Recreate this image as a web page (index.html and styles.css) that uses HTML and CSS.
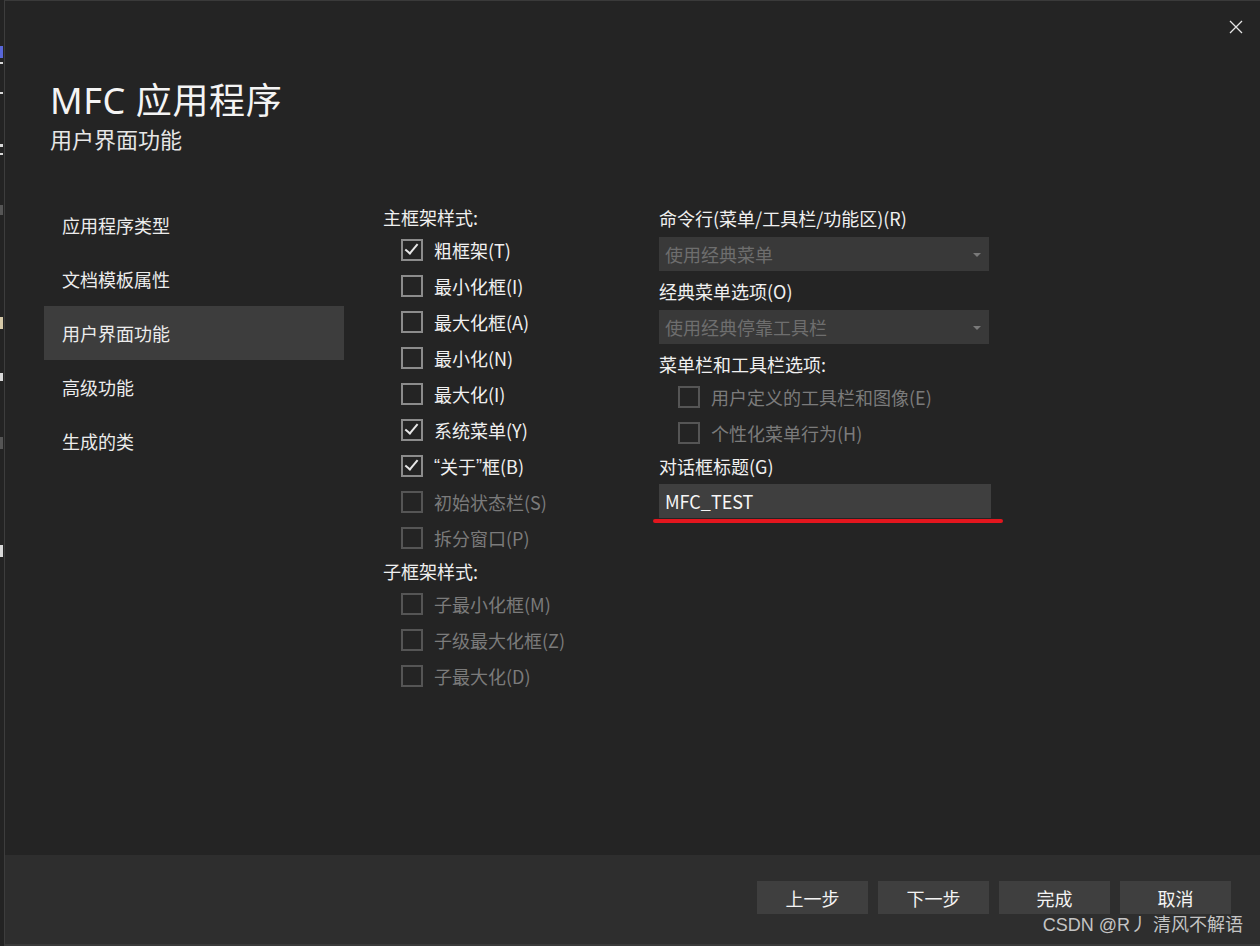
FILE: index.html
```html
<!DOCTYPE html>
<html lang="zh-CN">
  <head>
    <meta charset="UTF-8" />
    <meta name="viewport" content="width=device-width, initial-scale=1.0" />
    <title>MFC 应用程序 - 用户界面功能</title>
    <link rel="stylesheet" href="styles.css">
  </head>
  <body>
    <!-- sliver of the editor window behind the wizard -->
    <div class="behind">
      <span class="mark blue" style="margin-top:46px;height:12px"></span>
      <span class="mark" style="margin-top:4px;height:2px"></span>
      <span class="mark" style="margin-top:28px;height:2px"></span>
      <span class="mark" style="margin-top:50px;height:3px"></span>
      <span class="mark" style="margin-top:6px;height:2px"></span>
      <span class="mark dim" style="margin-top:50px;height:10px"></span>
      <span class="mark tan" style="margin-top:102px;height:12px"></span>
      <span class="mark" style="margin-top:44px;height:8px"></span>
      <span class="mark dim" style="margin-top:56px;height:12px"></span>
      <span class="mark" style="margin-top:96px;height:12px"></span>
    </div>

    <div class="dialog">
      <div class="dialog-body">
        <div class="header">
          <div class="titles">
            <h1>MFC 应用程序</h1>
            <h2>用户界面功能</h2>
          </div>
          <button class="close" title="关闭">
            <svg width="14" height="14" viewBox="0 0 14 14">
              <path d="M1 1 L13 13 M13 1 L1 13" stroke="#e6e6e6" stroke-width="1.3" fill="none" />
            </svg>
          </button>
        </div>

        <div class="main">
          <ul class="nav">
            <li>应用程序类型</li>
            <li>文档模板属性</li>
            <li class="active">用户界面功能</li>
            <li>高级功能</li>
            <li>生成的类</li>
          </ul>

          <div class="col-frames">
            <div class="group-title">主框架样式:</div>
            <label class="check checked"><span class="box"></span>粗框架(T)</label>
            <label class="check"><span class="box"></span>最小化框(I)</label>
            <label class="check"><span class="box"></span>最大化框(A)</label>
            <label class="check"><span class="box"></span>最小化(N)</label>
            <label class="check"><span class="box"></span>最大化(I)</label>
            <label class="check checked"><span class="box"></span>系统菜单(Y)</label>
            <label class="check checked"><span class="box"></span><span class="q">“</span>关于<span class="q">”</span>框(B)</label>
            <label class="check disabled"><span class="box"></span>初始状态栏(S)</label>
            <label class="check disabled"><span class="box"></span>拆分窗口(P)</label>
            <div class="group-title">子框架样式:</div>
            <label class="check disabled"><span class="box"></span>子最小化框(M)</label>
            <label class="check disabled"><span class="box"></span>子级最大化框(Z)</label>
            <label class="check disabled"><span class="box"></span>子最大化(D)</label>
          </div>

          <div class="col-options">
            <div class="field-label first">命令行(菜单/工具栏/功能区)(R)</div>
            <div class="select">使用经典菜单<span class="arrow"></span></div>
            <div class="field-label">经典菜单选项(O)</div>
            <div class="select">使用经典停靠工具栏<span class="arrow"></span></div>
            <div class="field-label">菜单栏和工具栏选项:</div>
            <label class="check disabled"><span class="box"></span>用户定义的工具栏和图像(E)</label>
            <label class="check disabled"><span class="box"></span>个性化菜单行为(H)</label>
            <div class="field-label first">对话框标题(G)</div>
            <div class="input-wrap">
              <input type="text" class="text-input" value="MFC_TEST" />
              <span class="underline"></span>
            </div>
          </div>
        </div>
      </div>

      <div class="footer">
        <button class="btn">上一步</button>
        <button class="btn">下一步</button>
        <button class="btn">完成</button>
        <button class="btn">取消</button>
        <span class="watermark">CSDN @R丿 清风不解语</span>
      </div>
    </div>
  </body>
</html>
```

FILE: styles.css
```css
body {
  margin: 0;
  height: 946px;
  display: flex;
  background-color: #252526;
  font-family: "Noto Sans CJK SC", "Liberation Sans", sans-serif;
  color: #f0f0f0;
  overflow: hidden;
}
.behind {
  width: 4px;
  background-color: #232323;
  display: flex;
  flex-direction: column;
}
.mark {
  display: block;
  width: 3px;
  background-color: #d8d8d8;
}
.mark.blue {
  background-color: #5866d8;
}
.mark.dim {
  background-color: #555;
}
.mark.tan {
  background-color: #d6c9a8;
}
.dialog {
  flex: 1;
  display: flex;
  flex-direction: column;
  background-color: #242424;
  border-left: 1px solid #3d3d3d;
  border-top: 1px solid #3a3a3a;
  border-bottom: 2px solid #3a3a3a;
}
.dialog-body {
  flex: 1;
}
.header {
  display: flex;
  justify-content: space-between;
  align-items: flex-start;
}
.titles {
  padding-top: 77px;
  padding-left: 45px;
}
h1 {
  margin: 0;
  font-family: "Noto Sans", "Noto Sans CJK SC", sans-serif;
  font-size: 36px;
  line-height: 46px;
  font-weight: 400;
  letter-spacing: 0.6px;
  color: #f4f4f4;
}
h2 {
  margin: 0;
  font-size: 22px;
  line-height: 28px;
  font-weight: 400;
  color: #e6e6e6;
}
.close {
  background: none;
  border: none;
  padding: 0;
  margin: 19px 17px 0 0;
  width: 14px;
  height: 14px;
  cursor: pointer;
}
.close svg {
  display: block;
}
.main {
  display: flex;
  margin-top: 46px;
  padding-left: 39px;
}
.nav {
  list-style: none;
  margin: 0;
  padding: 0;
  width: 300px;
}
.nav li {
  height: 54px;
  line-height: 54px;
  padding-left: 18px;
  font-size: 18px;
  color: #ececec;
}
.nav li.active {
  background-color: #3d3d3d;
}
.col-frames {
  margin-left: 39px;
  width: 276px;
  padding-top: 4px;
}
.group-title {
  font-size: 18px;
  line-height: 30px;
  color: #f0f0f0;
}
.check {
  display: flex;
  align-items: center;
  height: 36px;
  padding-left: 18px;
  font-size: 18px;
  color: #f0f0f0;
}
.check .q {
  font-family: "Liberation Sans", sans-serif;
}
.check .box {
  width: 18px;
  height: 18px;
  border: 2px solid #8c8c8c;
  margin-right: 11px;
  position: relative;
  flex-shrink: 0;
}
.check.checked .box::after {
  content: "";
  position: absolute;
  left: 5px;
  top: 0px;
  width: 5px;
  height: 11px;
  border-right: 2px solid #e8e8e8;
  border-bottom: 2px solid #e8e8e8;
  transform: rotate(40deg);
}
.check.disabled {
  color: #7b7b7b;
}
.check.disabled .box {
  border-color: #555;
}
.col-options {
  width: 332px;
  padding-top: 5px;
}
.col-options .check {
  padding-left: 19px;
}
.field-label {
  font-size: 18px;
  line-height: 30px;
  margin-top: 5px;
  color: #f0f0f0;
}
.field-label.first {
  margin-top: 0;
}
.select {
  margin-top: 4px;
  width: 324px;
  height: 34px;
  line-height: 34px;
  padding-left: 6px;
  background-color: #393939;
  color: #6e6e6e;
  font-size: 18px;
  position: relative;
}
.arrow {
  position: absolute;
  right: 8px;
  top: 16px;
  width: 0;
  height: 0;
  border-left: 4px solid transparent;
  border-right: 4px solid transparent;
  border-top: 4px solid #7a7a7a;
}
.input-wrap {
  position: relative;
  margin-top: 3px;
}
.text-input {
  display: block;
  box-sizing: border-box;
  width: 332px;
  height: 34px;
  padding: 0 6px;
  border: none;
  outline: none;
  background-color: #3f3f3f;
  color: #f6f6f6;
  font-family: "Noto Sans CJK SC", "Liberation Sans", sans-serif;
  font-size: 18px;
}
/* hand-drawn red mark under the title field */
.underline {
  position: absolute;
  left: -6px;
  top: 35px;
  width: 350px;
  height: 4px;
  border-radius: 2px;
  background-color: #e3161e;
}
.footer {
  position: relative;
  height: 89px;
  background-color: #2e2e2e;
  display: flex;
  justify-content: flex-end;
  align-items: flex-start;
  gap: 10px;
  padding: 26px 29px 0 0;
  box-sizing: border-box;
}
.btn {
  width: 111px;
  height: 33px;
  border: none;
  background-color: #3f3f3f;
  color: #f4f4f4;
  font-family: "Noto Sans CJK SC", "Liberation Sans", sans-serif;
  font-size: 18px;
  padding: 0;
  cursor: pointer;
}
.watermark {
  position: absolute;
  right: 17px;
  bottom: 7px;
  font-family: "Liberation Sans", "Noto Sans CJK SC", sans-serif;
  font-size: 18px;
  line-height: 24px;
  color: #c4c4c4;
  white-space: nowrap;
}
```
